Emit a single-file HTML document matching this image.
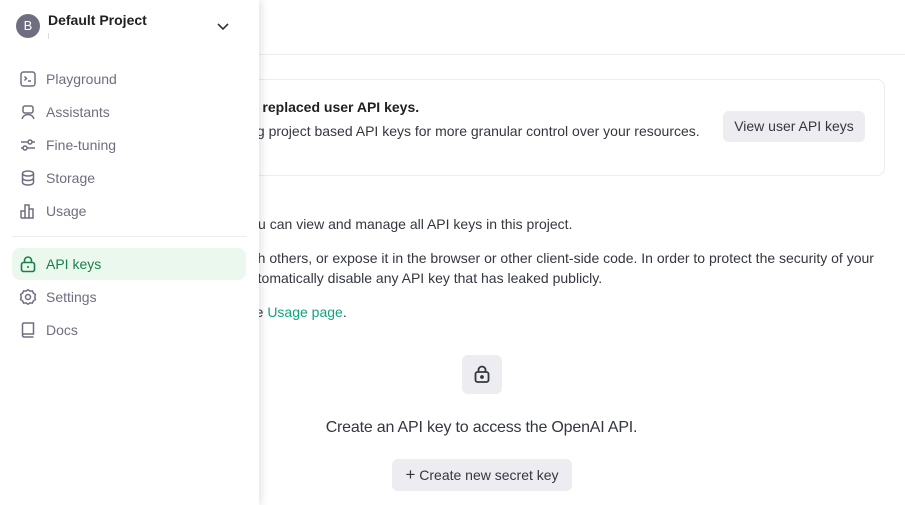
<!DOCTYPE html>
<html><head><style>
body{margin:0;width:905px;height:505px;overflow:hidden;background:#fff;font-family:"Liberation Sans",sans-serif;position:relative;color:#353740}
.abs{position:absolute;white-space:nowrap}
.side{position:absolute;left:0;top:0;width:259px;height:505px;background:#fff;box-shadow:2px 0 8px rgba(0,0,0,.12);z-index:2}
.nav{position:absolute;left:12px;width:234px;height:32px;font-size:14px;color:#6e6e80;display:flex;align-items:center}
.nav svg{margin-left:7px;margin-right:9px}
.nav.act{background:#ebf8ee;color:#1a7f4b;border-radius:8px}
</style></head><body>
<div class="abs" style="left:0;top:54px;width:905px;height:1px;background:#ececf1"></div>
<div class="abs" style="left:200px;top:79px;width:683px;height:95px;border:1px solid #ececf1;border-radius:8px"></div>
<div class="abs" style="left:202px;top:99px;font-size:14px;font-weight:bold;color:#202123">We have replaced user API keys.</div>
<div class="abs" style="left:159px;top:123px;font-size:14px;color:#353740">You're now using project based API keys for more granular control over your resources.</div>
<div class="abs" style="left:723px;top:111px;width:142px;height:31px;background:#ececf1;border-radius:6px;font-size:14px;line-height:31px;text-align:center;color:#353740">View user API keys</div>
<div class="abs" style="left:160px;top:216px;font-size:14px">On this page you can view and manage all API keys in this project.</div>
<div class="abs" style="left:74px;top:250px;font-size:14px">Do not share your API key with others, or expose it in the browser or other client-side code. In order to protect the security of your</div>
<div class="abs" style="left:74px;top:270px;font-size:14px">account, OpenAI may also automatically disable any API key that has leaked publicly.</div>
<div class="abs" style="left:73px;top:304px;font-size:14px">View usage per API key on the <span style="color:#10a37f">Usage page</span>.</div>
<div class="abs" style="left:462px;top:355px;width:40px;height:39px;background:#ececf1;border-radius:6px"></div>
<svg class="abs" style="left:472px;top:364px" width="20" height="20" viewBox="0 0 20 20" fill="none" stroke="#353740" stroke-width="1.8"><rect x="3.5" y="8" width="13" height="10" rx="2"/><path d="M6.5 8V6a3.5 3.5 0 0 1 7 0v2"/><circle cx="10" cy="13" r="1" fill="#353740"/></svg>
<div class="abs" style="left:0;width:963px;top:419px;text-align:center;font-size:16px;letter-spacing:-0.2px;color:#353740">Create an API key to access the OpenAI API.</div>
<div class="abs" style="left:392px;top:459px;width:180px;height:32px;background:#ececf1;border-radius:6px;font-size:14px;line-height:32px;text-align:center;color:#353740"><span style="font-size:17px">+</span> Create new secret key</div>

<div class="side">
<div class="abs" style="left:16px;top:14px;width:24px;height:24px;border-radius:50%;background:#6e6e80;color:#fff;font-size:13px;line-height:24px;text-align:center">B</div>
<div class="abs" style="left:48px;top:12px;font-size:14px;font-weight:bold;color:#202123">Default Project</div>
<div class="abs" style="left:48px;top:33px;width:1px;height:6px;background:#ddd"></div>
<svg class="abs" style="left:216px;top:21px" width="14" height="12" viewBox="0 0 14 12" fill="none" stroke="#353740" stroke-width="1.6"><path d="M2 3l5 5 5-5"/></svg>
<div class="nav" style="top:63px"><svg width="18" height="18" viewBox="0 0 18 18" fill="none" stroke="#6e6e80" stroke-width="1.5"><rect x="2" y="2" width="14" height="14" rx="2.5"/><path d="M5.5 6.5l2 2-2 2M9 11h3"/></svg>Playground</div>
<div class="nav" style="top:96px"><svg width="18" height="18" viewBox="0 0 18 18" fill="none" stroke="#6e6e80" stroke-width="1.5"><rect x="4" y="3" width="10" height="7" rx="2"/><path d="M7 6.5h0M11 6.5h0M3 16c1-3 3-4.5 6-4.5s5 1.5 6 4.5"/></svg>Assistants</div>
<div class="nav" style="top:129px"><svg width="18" height="18" viewBox="0 0 18 18" fill="none" stroke="#6e6e80" stroke-width="1.5"><path d="M2 6h7M13 6h3M2 12h2M8 12h8"/><circle cx="11" cy="6" r="2"/><circle cx="6" cy="12" r="2"/></svg>Fine-tuning</div>
<div class="nav" style="top:162px"><svg width="18" height="18" viewBox="0 0 18 18" fill="none" stroke="#6e6e80" stroke-width="1.5"><ellipse cx="9" cy="4.5" rx="5.5" ry="2.5"/><path d="M3.5 4.5v9c0 1.4 2.5 2.5 5.5 2.5s5.5-1.1 5.5-2.5v-9M3.5 9c0 1.4 2.5 2.5 5.5 2.5s5.5-1.1 5.5-2.5"/></svg>Storage</div>
<div class="nav" style="top:195px"><svg width="18" height="18" viewBox="0 0 18 18" fill="none" stroke="#6e6e80" stroke-width="1.5"><path d="M2 16V9h4v7M6 16V3h4v13M10 16V7h4v9H2"/></svg>Usage</div>
<div class="abs" style="left:12px;top:236px;width:235px;height:1px;background:#ececf1"></div>
<div class="nav act" style="top:248px"><svg width="18" height="18" viewBox="0 0 18 18" fill="none" stroke="#1a7f4b" stroke-width="1.6"><rect x="2.5" y="7.5" width="13" height="9" rx="2"/><path d="M5.5 7.5V5.5a3.5 3.5 0 0 1 7 0v2M9 11v2"/></svg>API keys</div>
<div class="nav" style="top:281px"><svg width="18" height="18" viewBox="0 0 18 18" fill="none" stroke="#6e6e80" stroke-width="1.5"><path d="M9 1.8l2 1.3 2.4-.2 1 2.2 2 1.4-.6 2.5.6 2.5-2 1.4-1 2.2-2.4-.2-2 1.3-2-1.3-2.4.2-1-2.2-2-1.4.6-2.5-.6-2.5 2-1.4 1-2.2 2.4.2z"/><circle cx="9" cy="9" r="2.5"/></svg>Settings</div>
<div class="nav" style="top:314px"><svg width="18" height="18" viewBox="0 0 18 18" fill="none" stroke="#6e6e80" stroke-width="1.5"><path d="M3.5 14V3.5a1.5 1.5 0 0 1 1.5-1.5h9.5v11H5a1.5 1.5 0 0 0 0 3h9.5"/></svg>Docs</div>
</div>
</body></html>
